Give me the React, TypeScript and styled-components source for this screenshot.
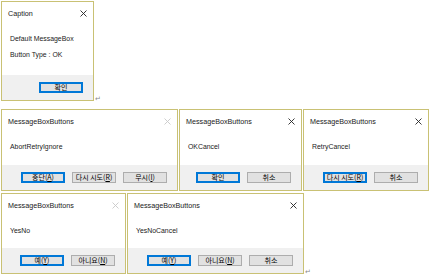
import React from "react";
import styled, { createGlobalStyle } from "styled-components";

const GlobalStyle = createGlobalStyle`
  body {
    margin: 0;
    background: #ffffff;
    font-family: "Liberation Sans", "Noto Sans CJK KR", sans-serif;
  }
`;

const Page = styled.div`
  display: flex;
  flex-direction: column;
  padding: 1px 0 0 1px;
`;

const Row = styled.div<{ $top?: number }>`
  display: flex;
  align-items: flex-end;
  gap: 1px;
  margin-top: ${(p) => p.$top ?? 0}px;
`;

const Dialog = styled.div<{ $w: number; $h: number }>`
  box-sizing: border-box;
  width: ${(p) => p.$w}px;
  height: ${(p) => p.$h}px;
  border: 1px solid #c9c174;
  background: #ffffff;
  display: flex;
  flex-direction: column;
`;

const TitleBar = styled.div`
  height: 23px;
  display: flex;
  align-items: center;
  justify-content: space-between;
  padding: 0 6px 0 6px;
  font-size: 7.2px;
  color: #1a1a1a;
`;

const Body = styled.div`
  flex: 1;
  padding: 10px 8px 0 8px;
  display: flex;
  flex-direction: column;
  gap: 8px;
`;

const Message = styled.div`
  font-size: 6.9px;
  line-height: 8px;
  color: #1a1a1a;
`;

const Footer = styled.div`
  height: 25px;
  background: #f0f0f0;
  display: flex;
  align-items: center;
  justify-content: flex-end;
  gap: 7px;
  padding-right: 10px;
`;

const Button = styled.div<{ $default?: boolean }>`
  box-sizing: border-box;
  width: 44px;
  height: 11px;
  background: #e1e1e1;
  border: 1px solid ${(p) => (p.$default ? "#0078d7" : "#adadad")};
  box-shadow: ${(p) => (p.$default ? "inset 0 0 0 1px #0078d7" : "none")};
  display: flex;
  align-items: center;
  justify-content: center;
  font-family: "Noto Sans CJK KR", "Liberation Sans", sans-serif;
  font-size: 7px;
  line-height: 1;
  color: #000;

  u {
    text-decoration: underline;
  }
`;

const ParaMark = styled.span`
  font-size: 7px;
  line-height: 7px;
  color: #8a8a8a;
  margin-bottom: -1px;
`;

const CloseIcon = ({ disabled }: { disabled?: boolean }) => (
  <svg width="7" height="7" viewBox="0 0 7 7">
    <path
      d="M0.5 0.5 L6.5 6.5 M6.5 0.5 L0.5 6.5"
      stroke={disabled ? "#c8c8c8" : "#222"}
      strokeWidth="0.9"
      fill="none"
    />
  </svg>
);

interface BoxProps {
  w: number;
  h: number;
  title: string;
  lines: string[];
  closeDisabled?: boolean;
  buttons: React.ReactNode[];
}

const MessageBox = ({ w, h, title, lines, closeDisabled, buttons }: BoxProps) => (
  <Dialog $w={w} $h={h}>
    <TitleBar>
      <span>{title}</span>
      <CloseIcon disabled={closeDisabled} />
    </TitleBar>
    <Body>
      {lines.map((l) => (
        <Message key={l}>{l}</Message>
      ))}
    </Body>
    <Footer>
      {buttons.map((b, i) => (
        <Button key={i} $default={i === 0}>
          {b}
        </Button>
      ))}
    </Footer>
  </Dialog>
);

const App = () => {
  return (
    <>
      <GlobalStyle />
      <Page>
        <Row>
          <MessageBox
            w={93}
            h={100}
            title="Caption"
            lines={["Default MessageBox", "Button Type : OK"]}
            buttons={["확인"]}
          />
          <ParaMark>↵</ParaMark>
        </Row>
        <Row $top={8}>
          <MessageBox
            w={177}
            h={82}
            title="MessageBoxButtons"
            lines={["AbortRetryIgnore"]}
            closeDisabled
            buttons={[
              <>중단(<u>A</u>)</>,
              <>다시 시도(<u>R</u>)</>,
              <>무시(<u>I</u>)</>,
            ]}
          />
          <MessageBox
            w={123}
            h={82}
            title="MessageBoxButtons"
            lines={["OKCancel"]}
            buttons={["확인", "취소"]}
          />
          <MessageBox
            w={126}
            h={82}
            title="MessageBoxButtons"
            lines={["RetryCancel"]}
            buttons={[<>다시 시도(<u>R</u>)</>, "취소"]}
          />
        </Row>
        <Row $top={2}>
          <MessageBox
            w={125}
            h={81}
            title="MessageBoxButtons"
            lines={["YesNo"]}
            closeDisabled
            buttons={[<>예(<u>Y</u>)</>, <>아니요(<u>N</u>)</>]}
          />
          <MessageBox
            w={177}
            h={81}
            title="MessageBoxButtons"
            lines={["YesNoCancel"]}
            buttons={[<>예(<u>Y</u>)</>, <>아니요(<u>N</u>)</>, "취소"]}
          />
          <ParaMark>↵</ParaMark>
        </Row>
      </Page>
    </>
  );
};

export default App;
